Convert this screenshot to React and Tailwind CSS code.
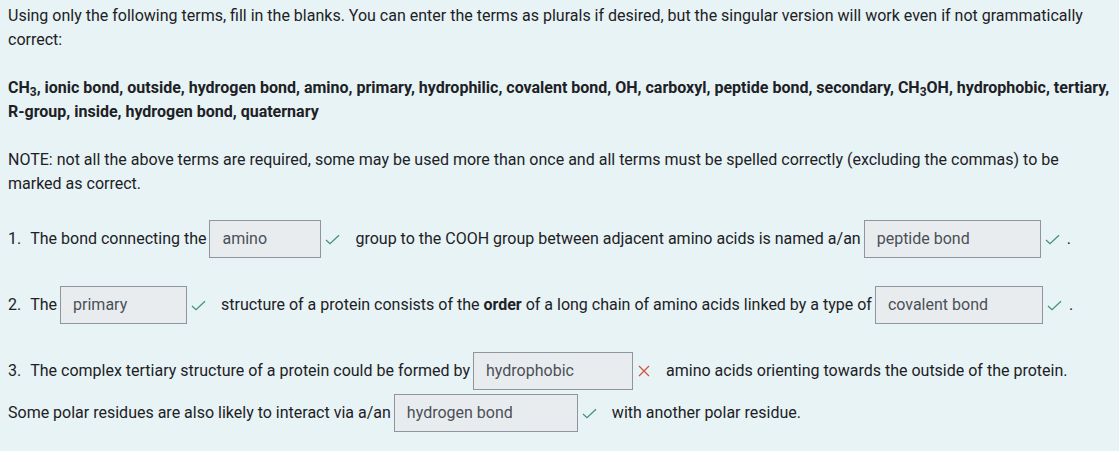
import React from "react";

const font = { fontFamily: "Roboto, 'Liberation Sans', sans-serif" };

function Check() {
  return (
    <svg width="15" height="11" viewBox="0 0 15 11" className="shrink-0 ml-[4px] mr-[15px]">
      <path d="M1 6 L5 9.6 L14 1.2" fill="none" stroke="#3f8f74" strokeWidth="1.2" />
    </svg>
  );
}

function Cross() {
  return (
    <svg width="12" height="12" viewBox="0 0 12 12" className="shrink-0 ml-[5px] mr-[16px]">
      <path d="M1 1 L11 11 M11 1 L1 11" fill="none" stroke="#d0533a" strokeWidth="1.2" />
    </svg>
  );
}

function Blank({ value, w }) {
  return (
    <div
      className="h-[38px] shrink-0 border border-[#8f959e] bg-[#e9ecef] text-[#495057] pl-[12px] flex items-center ml-[3px]"
      style={{ width: w }}
    >
      {value}
    </div>
  );
}

function Row({ children, className = "" }) {
  return <div className={"flex items-center h-[38px] whitespace-nowrap " + className}>{children}</div>;
}

export default function App() {
  return (
    <div className="min-h-[451px] w-[1119px] bg-[#e7f3f5] text-[#1d2125] text-[16px] leading-[24px] px-[8px] pt-[4px]" style={font}>
      <p className="mb-6">
        Using only the following terms, fill in the blanks. You can enter the terms as plurals if desired, but the singular version will work even if not grammatically correct:
      </p>
      <p className="mb-6 font-bold">
        CH<sub>3</sub>, ionic bond, outside, hydrogen bond, amino, primary, hydrophilic, covalent bond, OH, carboxyl, peptide bond, secondary, CH<sub>3</sub>OH, hydrophobic, tertiary, R-group, inside, hydrogen bond, quaternary
      </p>
      <p className="mb-6">
        NOTE: not all the above terms are required, some may be used more than once and all terms must be spelled correctly (excluding the commas) to be marked as correct.
      </p>

      <Row className="mt-[1px]">
        <span className="mr-[9px]">1.</span>
        <span>The bond connecting the</span>
        <Blank value="amino" w={112} />
        <Check />
        <span>group to the COOH group between adjacent amino acids is named a/an</span>
        <Blank value="peptide bond" w={177} />
        <Check />
        <span className="-ml-[8px]">.</span>
      </Row>

      <Row className="mt-[28px]">
        <span className="mr-[9px]">2.</span>
        <span>The</span>
        <Blank value="primary" w={127} />
        <Check />
        <span>
          structure of a protein consists of the <b>order</b> of a long chain of amino acids linked by a type of
        </span>
        <Blank value="covalent bond" w={168} />
        <Check />
        <span className="-ml-[8px]">.</span>
      </Row>

      <Row className="mt-[28px]">
        <span className="mr-[9px]">3.</span>
        <span>The complex tertiary structure of a protein could be formed by</span>
        <Blank value="hydrophobic" w={160} />
        <Cross />
        <span>amino acids orienting towards the outside of the protein.</span>
      </Row>
      <Row className="mt-[4px]">
        <span>Some polar residues are also likely to interact via a/an</span>
        <Blank value="hydrogen bond" w={184} />
        <Check />
        <span>with another polar residue.</span>
      </Row>
    </div>
  );
}
